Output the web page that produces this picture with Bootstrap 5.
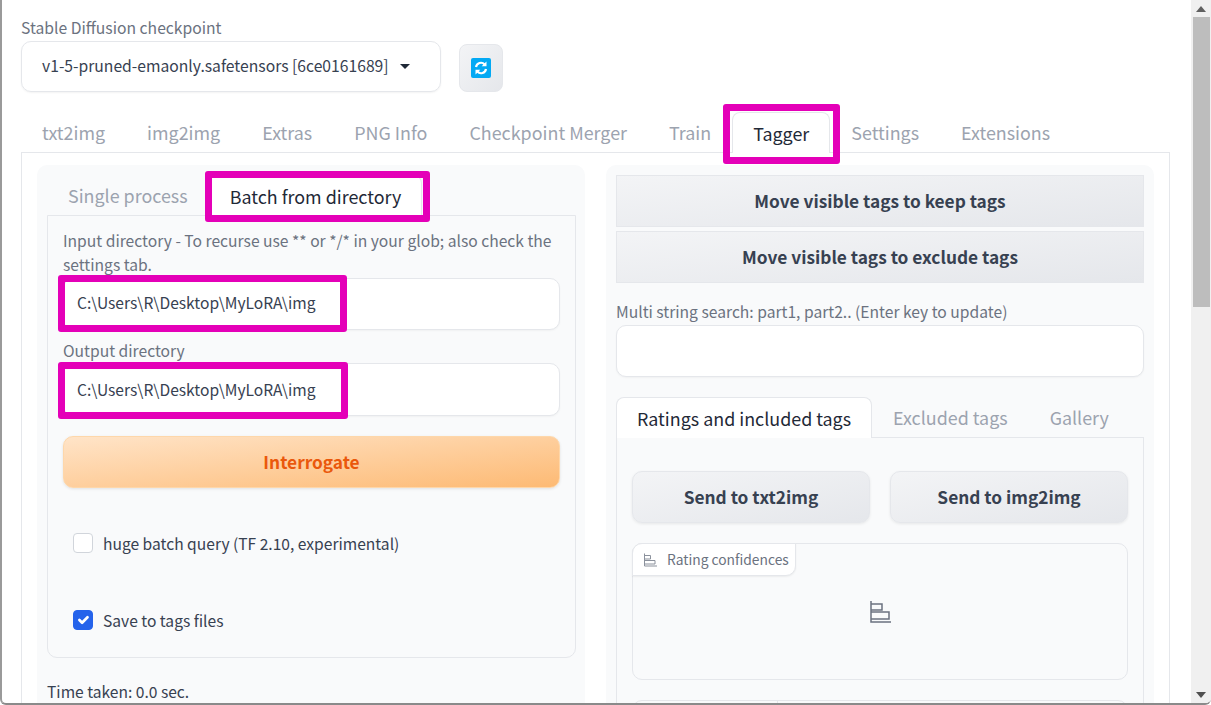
<!DOCTYPE html>
<html lang="en">
<head>
<meta charset="utf-8">
<title>Tagger</title>
<link href="https://cdn.jsdelivr.net/npm/bootstrap@5.3.0/dist/css/bootstrap.min.css" rel="stylesheet">
<style>
html,body{height:705px;overflow:hidden;background:#fff}
body{font-family:"Noto Sans CJK JP","Source Sans Pro","Noto Sans",sans-serif;color:#374151}
.shell{height:705px;border-left:2px solid #9a9a9a;border-bottom:2px solid #8a8a8a;border-bottom-left-radius:6px;border-bottom-right-radius:6px;overflow:hidden}
.page{width:1189px;padding:17px 21px 0 19px;height:703px;overflow:hidden}
.sbar{width:20px;height:703px;background:#f0f0f0}
.sbar-btn{height:17px;color:#5f5f5f}
.sbar-thumb{height:290px;background:#bdbdbd;margin:0 1px 0 2px}
.lbl{font-size:15.7px;line-height:21px;color:#6b7280}
.model-pick{width:420px;height:51px;border:1px solid #e5e7eb;border-radius:10px;padding:0 20px 1px;font-size:15.7px;margin-top:3px;box-shadow:0 1px 2px rgba(0,0,0,.05);color:#374151;white-space:nowrap}
.caret-d{width:0;height:0;border-left:5px solid transparent;border-right:5px solid transparent;border-top:5px solid #1f2937;margin-left:11px}
.refresh{width:44px;height:48px;background:linear-gradient(to bottom right,#f3f4f6,#e5e7eb);border:1px solid #e5e7eb;border-radius:8px;margin-left:18px;margin-top:6px;padding:0}
.tabbar{margin-top:20px;height:40px;padding-left:0;align-items:flex-start}
.tabi{font-size:17.9px;line-height:40px;color:#9ca3af;padding:0 21px;background:none;border:0;white-space:nowrap}
.tabi.on{color:#1f2937;background:#fff;border:1px solid #e5e7eb;border-bottom:0;border-radius:8px 8px 0 0;padding:0 20px;height:41px;position:relative;z-index:1}
.tabhost{position:relative}
.hl{position:absolute;border:7px solid #e400b8;border-radius:3px;pointer-events:none;z-index:5}
.pane{border:1px solid #e5e7eb;border-bottom:0;padding:12px 15px 0;height:552px;overflow:hidden}
.col-l,.col-r{width:548px;background:#f9fafb;border-radius:10px 10px 0 0;height:560px;flex:none}
.col-l{padding:10px 9px 0 10px}
.col-r{padding:10px 10px 0;margin-left:21px}
.sub-tabs{height:40px;align-items:flex-start}
.sub-tabs .tabi.on{line-height:38px}
.tbox{border:1px solid #e5e7eb;border-radius:0 0 10px 10px;height:443px;padding:13px 15px 0;position:relative}
.lbl2{font-size:15.65px;line-height:24px;color:#6b7280}
.fld{position:relative}
.ipt.form-control{height:52px;border:1px solid #e5e7eb;border-radius:10px;font-size:15.6px;color:#374151;padding:0 13px 4px;box-shadow:0 1px 2px rgba(0,0,0,.04);background:#fff}
.ipt.tall.form-control{height:53px;padding-bottom:2px}
.gap1{margin-top:1px}
.gap3{margin-top:9px}
.go-btn{height:52px;width:100%;border:1px solid #fed7aa;border-radius:10px;background:linear-gradient(to bottom right,#ffe4c8,#fdba74);font-size:17.3px;font-weight:700;color:#ea580c;box-shadow:0 1px 3px rgba(0,0,0,.1);padding:0;margin-top:20px}
.chk{font-size:15.6px;color:#374151;line-height:22px;gap:10px;padding-left:10px}
.chk .form-check-input{width:20px;height:20px;margin:0;border:1px solid #d1d5db;border-radius:4px;flex:none;background-color:#fff}
.chk .form-check-input:checked{background-color:#2563eb;border-color:#2563eb}
.chk-a{margin-top:44px}
.chk-b{margin-top:55px}
.timeline{font-size:15.6px;line-height:20px;color:#374151;margin-top:23px}
.wide-btn{display:block;width:100%;height:52px;border:1px solid #e5e7eb;border-radius:0;background:linear-gradient(to bottom right,#f3f4f6,#e5e7eb);font-size:17.3px;font-weight:700;color:#374151;padding:0}
.wide-btn+.wide-btn{margin-top:4px}
.send{border-radius:10px;width:238px;box-shadow:0 1px 3px rgba(0,0,0,.08)}
.wide-btn.send+.wide-btn.send{margin-top:0}
.search-lbl{margin-top:17px}
.ratings{margin-top:20px}
.rbox{border:1px solid #e5e7eb;border-bottom:0;padding:33px 15px 0;height:300px}
.lblbox{height:137px;border:1px solid #e5e7eb;border-radius:10px;position:relative;margin-top:20px}
.lbltag{position:absolute;left:-1px;top:-1px;height:33px;background:#fff;border:1px solid #e5e7eb;border-radius:10px 0 10px 0;padding:0 10px;font-size:13.8px;color:#6b7280;gap:10px;box-shadow:0 1px 2px rgba(0,0,0,.06);width:164px;white-space:nowrap}
.lbltag svg{flex:none}
.lblbox2{height:40px;border:1px solid #e5e7eb;border-radius:10px 10px 0 0;margin-top:20px}
.lblbox2 i{display:block;width:145px;height:100%;border-right:1px solid #e5e7eb}
.hl-tagger{left:702px;top:-8px;width:117px;height:60px}
.hl-batch{left:158px;top:-4px;width:225px;height:51px}
.hl-in{left:-5px;top:-3px;width:289px;height:57px}
.hl-out{left:-5px;top:-1px;width:290px;height:57px}
</style>
</head>
<body>
<div class="shell d-flex">
  <div class="page flex-shrink-0">
    <div class="lbl">Stable Diffusion checkpoint</div>
    <div class="d-flex align-items-start">
      <div class="model-pick d-flex align-items-center">v1-5-pruned-emaonly.safetensors [6ce0161689]<span class="caret-d"></span></div>
      <button class="refresh d-flex align-items-center justify-content-center" type="button" aria-label="Refresh">
        <svg width="20" height="20" viewBox="0 0 20 20"><rect width="20" height="20" rx="2" fill="#03a9f4"/><path d="M5 9a5 5 0 0 1 8.600-2.600M15 11a5 5 0 0 1-8.600 2.600" fill="none" stroke="#fff" stroke-width="2.200"/><path d="M15.500 3.500v4.800h-4.800zM4.500 16.500v-4.800h4.800z" fill="#fff"/></svg>
      </button>
    </div>
    <div class="tabbar d-flex tabhost">
      <button class="tabi">txt2img</button><button class="tabi">img2img</button><button class="tabi">Extras</button><button class="tabi">PNG Info</button><button class="tabi">Checkpoint Merger</button><button class="tabi">Train</button><button class="tabi on">Tagger</button><button class="tabi">Settings</button><button class="tabi">Extensions</button>
      <span class="hl hl-tagger"></span>
    </div>
    <div class="pane d-flex">
      <div class="col-l">
        <div class="sub-tabs d-flex tabhost">
          <button class="tabi">Single process</button><button class="tabi on">Batch from directory</button>
          <span class="hl hl-batch"></span>
        </div>
        <div class="tbox">
          <div class="lbl2">Input directory - To recurse use ** or */* in your glob; also check the settings tab.</div>
          <div class="fld gap1"><input class="ipt form-control" value="C:\Users\R\Desktop\MyLoRA\img"><span class="hl hl-in"></span></div>
          <div class="lbl2 gap3">Output directory</div>
          <div class="fld"><input class="ipt tall form-control" value="C:\Users\R\Desktop\MyLoRA\img"><span class="hl hl-out"></span></div>
          <button class="go-btn">Interrogate</button>
          <label class="chk chk-a d-flex align-items-center"><input class="form-check-input" type="checkbox">huge batch query (TF 2.10, experimental)</label>
          <label class="chk chk-b d-flex align-items-center"><input class="form-check-input" type="checkbox" checked>Save to tags files</label>
        </div>
        <div class="timeline">Time taken: 0.0 sec.</div>
      </div>
      <div class="col-r">
        <button class="wide-btn">Move visible tags to keep tags</button>
        <button class="wide-btn">Move visible tags to exclude tags</button>
        <div class="lbl2 search-lbl">Multi string search: part1, part2.. (Enter key to update)</div>
        <input class="ipt form-control gap1" value="">
        <div class="ratings">
          <div class="sub-tabs d-flex">
            <button class="tabi on">Ratings and included tags</button><button class="tabi">Excluded tags</button><button class="tabi">Gallery</button>
          </div>
          <div class="rbox">
            <div class="d-flex justify-content-between">
              <button class="wide-btn send">Send to txt2img</button>
              <button class="wide-btn send">Send to img2img</button>
            </div>
            <div class="lblbox d-flex align-items-center justify-content-center">
              <div class="lbltag d-flex align-items-center">
                <svg width="14" height="14" viewBox="0 0 14 14" fill="none" stroke="#8b919c"><path d="M1.500 .5v12.500h12.500M1.500 2.500h6v3.500h-6M1.500 7.500h10.500v3.500h-10.500"/></svg>Rating confidences
              </div>
              <svg width="21" height="22" viewBox="0 0 21 22" fill="none" stroke="#6b7280" stroke-width="1.500"><path d="M1 0v21h20M1 3h11v6H1M1 11h18v7H1"/></svg>
            </div>
            <div class="lblbox2"><i></i></div>
          </div>
        </div>
      </div>
    </div>
  </div>
  <div class="sbar flex-shrink-0 d-flex flex-column">
    <div class="sbar-btn d-flex justify-content-center align-items-center"><svg width="10" height="6"><path d="M5 0l5 6H0z" fill="#606060"/></svg></div>
    <div class="sbar-thumb"></div>
    <div class="flex-grow-1"></div>
    <div class="sbar-btn d-flex justify-content-center align-items-center"><svg width="10" height="6"><path d="M0 0h10L5 6z" fill="#505050"/></svg></div>
  </div>
</div>
</body>
</html>
